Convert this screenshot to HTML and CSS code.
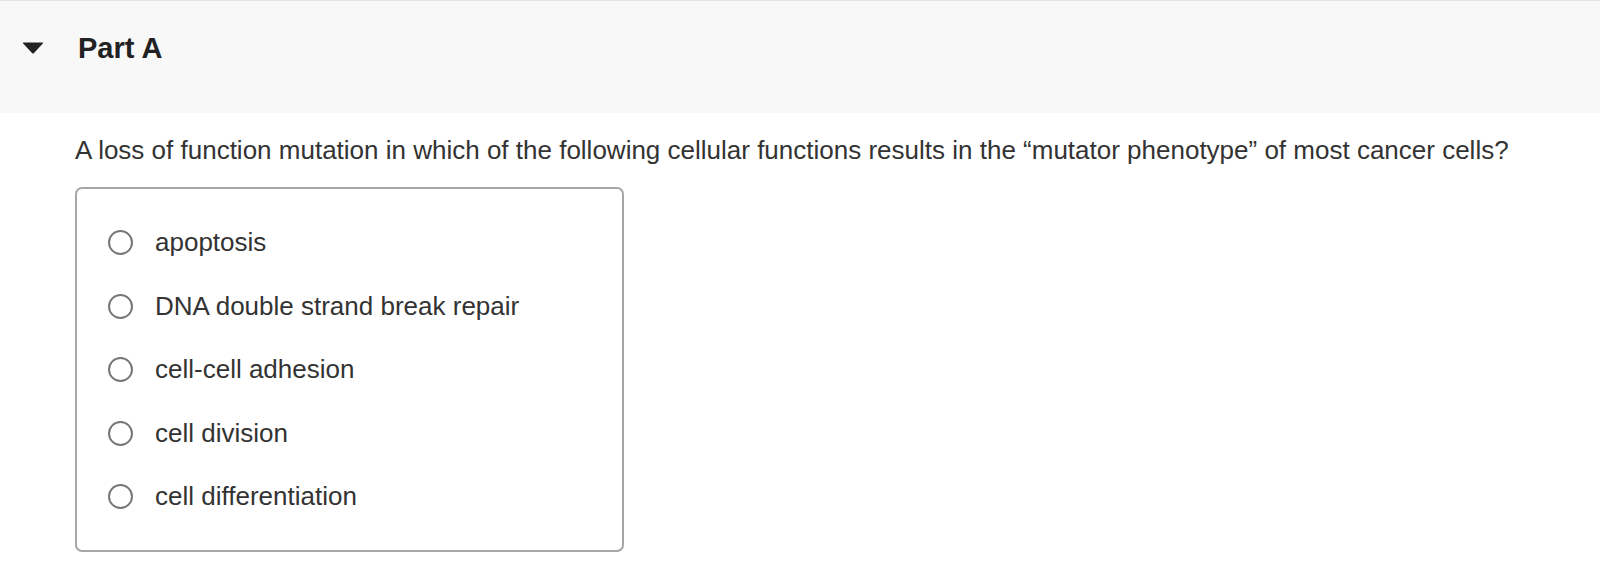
FILE: index.html
```html
<!DOCTYPE html>
<html lang="en">
<head>
    <meta charset="UTF-8">
    <title>Part A</title>
    <link rel="stylesheet" href="styles.css">
</head>
<body>

    <div class="part-header">
        <svg class="caret" width="22" height="12" viewBox="0 0 22 12">
            <path d="M1.5 0.5 H20.5 Q21.6 0.5 20.8 1.4 L11.8 11.2 Q11 12 10.2 11.2 L1.2 1.4 Q0.4 0.5 1.5 0.5 Z" fill="#222"/>
        </svg>
        <h2 class="part-title">Part A</h2>
    </div>

    <div class="part-body">
        <p class="question">A loss of function mutation in which of the following cellular functions results in the “mutator phenotype” of most cancer cells?</p>

        <div class="choices">
            <label class="choice"><input type="radio" name="answer"><span>apoptosis</span></label>
            <label class="choice"><input type="radio" name="answer"><span>DNA double strand break repair</span></label>
            <label class="choice"><input type="radio" name="answer"><span>cell-cell adhesion</span></label>
            <label class="choice"><input type="radio" name="answer"><span>cell division</span></label>
            <label class="choice"><input type="radio" name="answer"><span>cell differentiation</span></label>
        </div>
    </div>

</body>
</html>
```

FILE: styles.css
```css
body {
    margin: 0;
    padding: 0;
    background-color: #fff;
    color: #333;
    font-family: "Liberation Sans", Arial, Helvetica, sans-serif;
}
.part-header {
    display: flex;
    align-items: center;
    height: 94px;
    padding: 0 0 18px 22px;
    border-top: 1px solid #e3e3e3;
    background-color: #f8f8f8;
}
.caret {
    flex-shrink: 0;
    margin-right: 34px;
}
.part-title {
    margin: 0;
    font-size: 29px;
    font-weight: bold;
    color: #222;
}
.part-body {
    padding-left: 75px;
}
.question {
    margin: 22px 0 22px 0;
    font-size: 26px;
    line-height: 30px;
}
.choices {
    box-sizing: border-box;
    width: 549px;
    padding: 22px 0 21.5px 31px;
    border: 2px solid #a6a6a6;
    border-radius: 7px;
}
.choice {
    display: flex;
    align-items: center;
    height: 63.5px;
    font-size: 26px;
    cursor: pointer;
}
.choice input {
    appearance: none;
    -webkit-appearance: none;
    width: 25px;
    height: 25px;
    margin: 0 22px 0 0;
    border: 2px solid #777;
    border-radius: 50%;
    background: #fff;
    flex-shrink: 0;
}
```
